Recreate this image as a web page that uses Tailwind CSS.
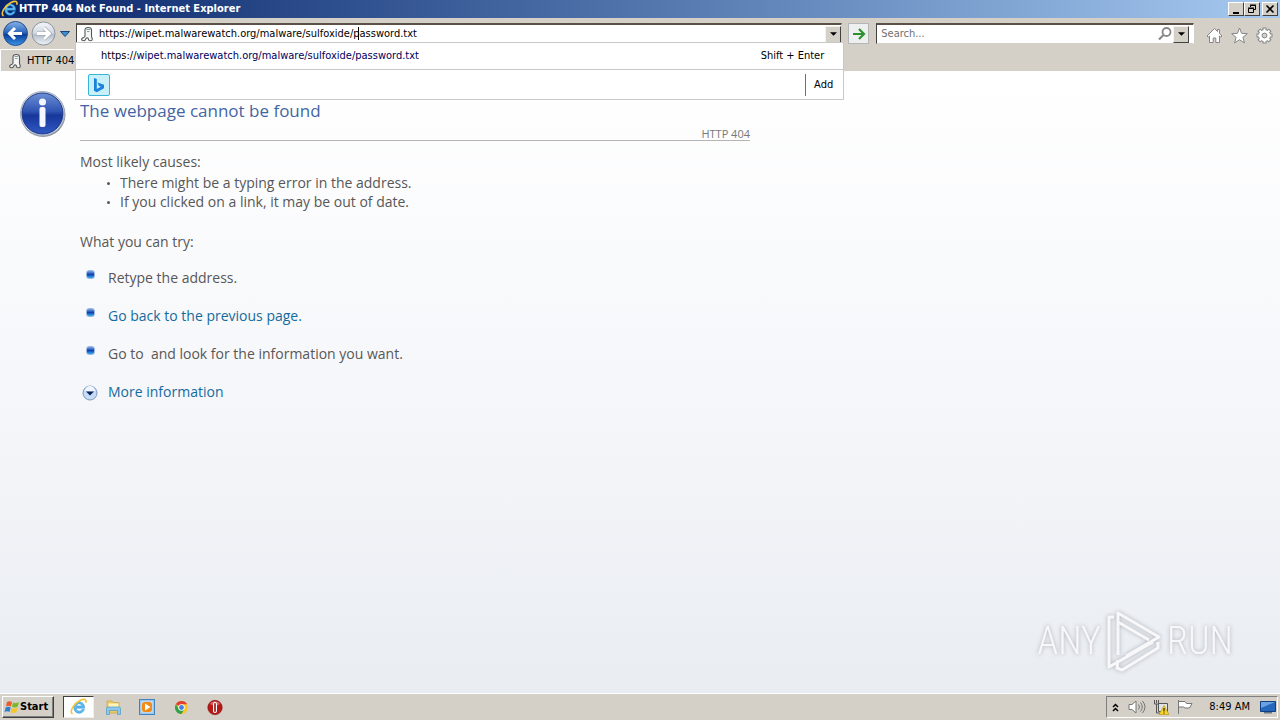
<!DOCTYPE html>
<html lang="en">
<head>
  <meta charset="UTF-8" />
  <title>HTTP 404 Not Found</title>
  <script src="https://cdn.jsdelivr.net/npm/@tailwindcss/browser@4"></script>
</head>
<body class="h-screen flex flex-col overflow-hidden bg-[#d4d0c8] text-black text-[11px] leading-[14px] font-['DejaVu_Sans_Condensed','DejaVu_Sans',sans-serif]">

  <!-- Shared icons -->
  <svg class="hidden">
    <symbol id="ie" viewBox="0 0 18 18">
      <path d="M14.6 10.2H6.2c.1 3.3 4.7 3.9 5.7 1.4h2.5c-2.2 5.600-10.600 4.600-10.600-2.200C3.800 2.200 15 1.700 14.600 10.200zM6.400 8h5.500C11.400 5 6.900 5 6.400 8z" fill="#5cbdf2" stroke="#2a86d0" stroke-width=".5" />
      <path d="M2.500 16C-1 13.500 4 5.500 10 2.500c4.500-2.200 6.800-1 5.700 2.200" fill="none" stroke="#f3c535" stroke-width="1.600" />
    </symbol>
    <symbol id="doc" viewBox="0 0 14 16">
      <path d="M5 10V4C5 .7 11.500.7 11.500 4v6c0 1.500.8 1.800.8 3 0 2.300-3.800 2.300-3.800.2 0-1.400-1.300-1.700-2.300-.9-.9.800-.2 1.900-1.700 2.300-2.200.5-3.700-1.200-2.300-2.300C3.500 11.600 5 11.500 5 10z" fill="#f5f5f5" stroke="#55595c" stroke-width="1.100" />
      <path d="M6.500 3.500H10M7 5.500h2.500" stroke="#83a39c" />
    </symbol>
    <symbol id="down" viewBox="0 0 8 4">
      <path d="M0 0h8L4 4z" />
    </symbol>
  </svg>

  <!-- Title bar -->
  <header class="h-[18px] shrink-0 flex items-center pl-px pr-[2px] bg-linear-to-r from-[#0a246a] to-[#a6caf0]">
    <svg class="size-[18px] shrink-0"><use href="#ie" /></svg>
    <h1 class="flex-1 text-white font-bold">HTTP 404 Not Found - Internet Explorer</h1>
    <div class="flex">
      <button aria-label="Minimize" class="w-4 h-[14px] grid place-items-center bg-[#d4d0c8] border border-t-white border-l-white border-r-[#404040] border-b-[#404040]">
        <svg viewBox="0 0 12 10" class="w-3 h-[10px]"><path d="M3 8h6v2H3z" /></svg>
      </button>
      <button aria-label="Restore" class="w-4 h-[14px] grid place-items-center bg-[#d4d0c8] border border-t-white border-l-white border-r-[#404040] border-b-[#404040]">
        <svg viewBox="0 0 12 10" class="w-3 h-[10px]" fill="none" stroke="#000"><path d="M4.500 3V1.500h5v4H8M4 1h6M2.500 4.500h5v4h-5zM2 4h6" /></svg>
      </button>
      <button aria-label="Close" class="ml-[2px] w-4 h-[14px] grid place-items-center bg-[#d4d0c8] border border-t-white border-l-white border-r-[#404040] border-b-[#404040]">
        <svg viewBox="0 0 12 10" class="w-3 h-[10px]"><path d="M2.500 1.500l7 7M9.500 1.500l-7 7" stroke="#000" stroke-width="1.600" /></svg>
      </button>
    </div>
  </header>

  <!-- Toolbar -->
  <div class="h-[31px] shrink-0 flex items-center pl-[2px] pr-[7px]">
    <button aria-label="Back" class="size-[27px]">
      <svg viewBox="0 0 27 27">
        <defs><linearGradient id="back" x2="0" y2="1"><stop stop-color="#86b3e8" /><stop offset=".45" stop-color="#2c68bd" /><stop offset=".55" stop-color="#0b3d99" /><stop offset="1" stop-color="#3a98ec" /></linearGradient></defs>
        <circle cx="13.500" cy="13.500" r="12" fill="url(#back)" stroke="#2b4f88" />
        <path d="M20 13.500H8M13 8l-5.500 5.500L13 19" fill="none" stroke="#fff" stroke-width="3" />
      </svg>
    </button>
    <button aria-label="Forward" class="ml-px size-[27px]">
      <svg viewBox="0 0 27 27">
        <defs><linearGradient id="fwd" x2="0" y2="1"><stop stop-color="#f4f6f9" /><stop offset=".48" stop-color="#d3d9e1" /><stop offset=".55" stop-color="#b3bcc8" /><stop offset="1" stop-color="#f1f5fa" /></linearGradient></defs>
        <circle cx="13.500" cy="13.500" r="11.500" fill="url(#fwd)" stroke="#8b949f" />
        <path d="M7 13.500h12M14 8l5.500 5.500L14 19" fill="none" stroke="#9aa3ae" stroke-width="4" />
        <path d="M7 13.500h12M14 8l5.500 5.500L14 19" fill="none" stroke="#fff" stroke-width="2.800" />
      </svg>
    </button>
    <button aria-label="Recent pages" class="ml-[3px] w-[10px]">
      <svg viewBox="0 0 10 6" class="w-[10px] h-[6px]"><path d="M.5.500h9L5 5.500z" fill="#3f8fd0" stroke="#16477c" /></svg>
    </button>

    <!-- Address bar with suggestions -->
    <div class="relative ml-[6px] flex-1">
      <div class="h-[21px] flex items-center bg-white border border-t-2 border-t-[#5b5147] border-l-[#404040] border-r-[#d4d0c8] border-b-[#d4d0c8] pl-[3px]">
        <svg class="w-[14px] h-4 shrink-0"><use href="#doc" /></svg>
        <div class="relative flex-1 ml-[5px]">
          <input type="text" aria-label="Address" value="https://wipet.malwarewatch.org/malware/sulfoxide/password.txt" class="block w-full outline-none" />
          <span class="absolute left-[259px] top-0 w-px h-[13px] bg-black"></span>
        </div>
        <button aria-label="Show address list" class="w-4 h-[17px] grid place-items-center bg-[#d4d0c8] border border-t-[#f4f2ee] border-l-[#f4f2ee] border-r-[#404040] border-b-[#404040]">
          <svg class="w-[7px] h-1"><use href="#down" /></svg>
        </button>
      </div>
      <div class="absolute z-10 top-[19px] -left-px -right-[2px] bg-white border border-[#c8c8c8]">
        <a href="#" class="h-[26px] flex items-center pl-[25px] pr-[19px] text-black">
          <span class="flex-1">https://<span class="text-[#00005c]">wipet.malwarewatch.org/malware/sulfoxide/password.txt</span></span>
          <span>Shift + Enter</span>
        </a>
        <div class="h-[30px] flex items-center justify-between pl-3 pr-[10px] border-t border-[#c8c8c8]">
          <button aria-label="Bing" class="size-[22px]">
            <svg viewBox="0 0 22 22">
              <rect x=".5" y=".5" width="21" height="21" rx="1.500" fill="#c8f0fb" stroke="#38b4d6" />
              <path d="M6 4l2.800 1v8.500L8.800 15l4-2.300-2-1-1.300-3.200 6.500 2.300v3.400L8.800 18.300 6 16.700z" fill="#1a83dc" />
            </svg>
          </button>
          <button class="h-[22px] pl-2 border-l border-[#707070]">Add</button>
        </div>
      </div>
    </div>
    <button aria-label="Go" class="ml-[6px] size-[21px] grid place-items-center bg-[#eef0f0] border border-[#b4b6b8]">
      <svg viewBox="0 0 14 12" class="w-[14px] h-3"><path d="M1 6h11M7 1l5 5-5 5" fill="none" stroke="#2d922d" stroke-width="2.200" /></svg>
    </button>
    <div class="ml-[7px] w-[25%] h-[21px] flex items-center bg-white border border-t-2 border-t-[#5b5147] border-l-[#404040] border-r-white border-b-[#d4d0c8] pl-1 pr-1">
      <input type="text" aria-label="Search" placeholder="Search..." class="flex-1 outline-none placeholder:text-[#707070]" />
      <button aria-label="Search" class="w-[14px] h-4">
        <svg viewBox="0 0 14 16" class="w-[14px] h-4" fill="none" stroke="#888" stroke-width="1.800"><circle cx="8.500" cy="6" r="4" /><path d="M5.500 9L1 13.500" stroke-width="2.200" /></svg>
      </button>
      <button aria-label="Search options" class="ml-px w-4 h-[17px] grid place-items-center bg-[#d4d0c8] border border-t-[#f4f2ee] border-l-[#f4f2ee] border-r-[#404040] border-b-[#404040]">
        <svg class="w-[7px] h-1"><use href="#down" /></svg>
      </button>
    </div>
    <div class="ml-3 mt-1 flex gap-2">
      <button aria-label="Home" class="size-[17px]">
        <svg viewBox="0 0 17 17"><path d="M8.500 1.500L1 9l1.200 1.200L3.500 9v6.500h3.700V11h2.600v4.500h3.700V9l1.300 1.200L16 9l-2.500-2.500v-4h-2v2z" fill="#fff" stroke="#858585" /></svg>
      </button>
      <button aria-label="Favorites" class="size-[17px]">
        <svg viewBox="0 0 17 17"><path d="M8.500 1l2.100 5.300 5.700.4-4.400 3.600 1.500 5.600-4.900-3.100-4.900 3.100 1.500-5.600L.7 6.700l5.700-.4z" fill="#fff" stroke="#858585" /></svg>
      </button>
      <button aria-label="Tools" class="size-[17px]">
        <svg viewBox="0 0 17 17" fill="none">
          <path d="M8.500 .5v16M.5 8.500h16M2.800 2.800l11.400 11.400M14.200 2.800L2.800 14.200" stroke="#858585" stroke-width="4" />
          <circle cx="8.500" cy="8.500" r="4.300" stroke="#858585" stroke-width="4.400" />
          <path d="M8.500 1.500v14M1.500 8.500h14M3.500 3.500l10 10M13.500 3.500l-10 10" stroke="#fff" stroke-width="2" />
          <circle cx="8.500" cy="8.500" r="4.200" stroke="#fff" stroke-width="2.800" />
          <circle cx="8.500" cy="8.500" r="2.400" fill="#d4d0c8" stroke="#858585" />
        </svg>
      </button>
    </div>
  </div>

  <!-- Tab row -->
  <div class="h-[22px] shrink-0 flex">
    <button class="flex items-center gap-[5px] pl-[7px] border-l border-t border-white">
      <svg class="w-[14px] h-4"><use href="#doc" /></svg>
      <span>HTTP 404</span>
    </button>
  </div>

  <!-- Error page -->
  <main class="relative flex-1 min-h-0 pt-5 pl-[19px] bg-linear-to-b from-white via-[#f6f7fa] via-50% to-[#e9edf2] text-sm leading-[19px] text-[#575757] font-['Open_Sans','Noto_Sans',sans-serif]">
    <div class="flex">
      <svg viewBox="0 0 48 48" class="size-12 shrink-0">
        <defs><linearGradient id="info" x2="0" y2="1"><stop stop-color="#6e91d5" /><stop offset=".45" stop-color="#2e53b2" /><stop offset=".55" stop-color="#17379a" /><stop offset="1" stop-color="#3159c4" /></linearGradient></defs>
        <circle cx="24" cy="23.500" r="22.500" fill="#8e96a5" />
        <circle cx="23.500" cy="22.500" r="22" fill="#dbe1eb" stroke="#a3acbc" />
        <circle cx="23.500" cy="22.500" r="20.500" fill="url(#info)" stroke="#1c3684" />
        <circle cx="23.500" cy="11" r="3.500" fill="#f4f7ff" />
        <rect x="20.500" y="16" width="6" height="20" rx="2" fill="#f4f7ff" />
      </svg>
      <div class="ml-[13px] w-[670px]">
        <h2 class="pt-2 text-[17px] leading-6 text-[#4465a2]">The webpage cannot be found</h2>
        <p class="mt-1 text-right text-[11px] leading-[13px] text-[#787878] border-b border-[#b5b5b5]">HTTP 404</p>
        <p class="mt-[11px]">Most likely causes:</p>
        <ul class="mt-[2px] pl-10 list-none">
          <li class="relative"><span class="absolute -left-[13px] top-[9px] size-[3px] rounded-full bg-[#575757]"></span>There might be a typing error in the address.</li>
          <li class="relative"><span class="absolute -left-[13px] top-[9px] size-[3px] rounded-full bg-[#575757]"></span>If you clicked on a link, it may be out of date.</li>
        </ul>
        <p class="mt-[21px]">What you can try:</p>
        <ul class="mt-[17px] flex flex-col gap-[19px]">
          <li class="flex">
            <span class="w-[9px] h-[9px] mt-[2px] ml-[6px] mr-[13px] rounded-[3px] border border-[#9bb8e2] bg-linear-to-b from-[#7ba7e6] via-[#123fae] to-[#40b0ee]"></span>
            <span>Retype the address.</span>
          </li>
          <li class="flex">
            <span class="w-[9px] h-[9px] mt-[2px] ml-[6px] mr-[13px] rounded-[3px] border border-[#9bb8e2] bg-linear-to-b from-[#7ba7e6] via-[#123fae] to-[#40b0ee]"></span>
            <a href="#" class="text-[#136b9e]">Go back to the previous page.</a>
          </li>
          <li class="flex">
            <span class="w-[9px] h-[9px] mt-[2px] ml-[6px] mr-[13px] rounded-[3px] border border-[#9bb8e2] bg-linear-to-b from-[#7ba7e6] via-[#123fae] to-[#40b0ee]"></span>
            <span>Go to &nbsp;and look for the information you want.</span>
          </li>
          <li class="flex items-end">
            <svg viewBox="0 0 16 16" class="ml-[2px] mr-[10px] size-4">
              <circle cx="8" cy="8" r="7" fill="#c5dcf6" stroke="#7e99bd" />
              <path d="M3 6a5 5 0 0 1 10 0z" fill="#eff6ff" />
              <path d="M4 6.500h8L8 10.500z" fill="#0c245c" />
            </svg>
            <a href="#" class="text-[#136b9e]">More information</a>
          </li>
        </ul>
      </div>
    </div>

    <!-- Watermark -->
    <div class="absolute right-[47px] bottom-5 flex items-center gap-1 text-[38px] leading-[60px] font-light text-[#f8f8fb] font-['Roboto_Condensed','Open_Sans_Condensed',sans-serif] drop-shadow-[0_0_2px_#aaadb4]">
      <span>ANY</span>
      <svg viewBox="0 0 58 64" class="w-[58px] h-16" fill="none" stroke="#f8f8fb" stroke-width="3" stroke-linejoin="round">
        <path d="M13 46V4L54 28 21 47M13 13l31 18M9 8H4v50l44-25M13 51l-1 8 5 2 36-22v-6" />
      </svg>
      <span>RUN</span>
    </div>
  </main>

  <!-- Taskbar -->
  <footer class="h-[27px] shrink-0 flex items-center pl-[2px] pr-[2px] border-t border-white bg-[#d4d0c8]">
    <button class="h-[22px] w-[52px] flex items-center pl-px font-bold text-[11px] border border-t-white border-l-white border-r-[#404040] border-b-[#404040] shadow-[inset_-1px_-1px_#808080]">
      <svg viewBox="0 0 16 16" class="size-4 shrink-0">
        <path d="M3 3c2-1.300 3.500-1 5 0L7 7.500c-1.600-1-3-1-5 0z" fill="#ed5c24" />
        <path d="M9 3.500c2 1 3.500 1 6-.5l-1.300 4.500c-2 1.500-4 1.300-5.700.3z" fill="#79b82a" />
        <path d="M1.700 8.500c2-1 3.500-1 5 0l-1.200 4.500c-1.600-1-3-1-5 0z" fill="#2b80cf" />
        <path d="M7.700 9c2 1 3.500 1 6-.5l-1.300 4.500c-2 1.500-4 1.300-5.700.3z" fill="#f7c525" />
      </svg>
      <span>Start</span>
    </button>
    <nav class="ml-[9px] flex items-center gap-[17px]">
      <button aria-label="Internet Explorer" class="w-[31px] h-[22px] grid place-items-center bg-white border border-t-[#404040] border-l-[#404040] border-r-[#eee] border-b-[#eee]">
        <svg class="size-[18px]"><use href="#ie" /></svg>
      </button>
      <button aria-label="Windows Explorer" class="-ml-[6px] size-[17px]">
        <svg viewBox="0 0 17 17">
          <path d="M2 2h5l1 1.500h6V14H2z" fill="#eecb62" stroke="#caa246" stroke-width=".7" />
          <path d="M3.500 4.500h10v5h-10z" fill="#fff4bd" />
          <path d="M1.500 15.500V9.500q0-1.500 1.500-1.500h11q1.500 0 1.500 1.500v6h-3v-4h-8v4z" fill="#8dc8ea" stroke="#4f99c4" stroke-width=".7" />
        </svg>
      </button>
      <button aria-label="Media Player" class="size-[17px]">
        <svg viewBox="0 0 17 17">
          <rect x=".5" y=".5" width="15" height="15" fill="#9bc7ec" stroke="#4283be" />
          <rect x="2.500" y="2.500" width="11" height="11" fill="#d8ebfa" />
          <rect x="3" y="3" width="10" height="10" rx="2.500" fill="#f08a19" />
          <path d="M6 4.500v7L11.500 8z" fill="#fff" />
        </svg>
      </button>
      <button aria-label="Chrome" class="size-[17px]">
        <svg viewBox="0 0 17 17">
          <circle cx="8.500" cy="8.500" r="6.500" fill="#f9c62b" />
          <path d="M8.500 8.500L2.870 5.250A6.500 6.500 0 0 1 14.130 5.250H8.500z" fill="#e23d30" />
          <path d="M2.870 5.250A6.500 6.500 0 0 0 8.500 15l2.800-4.900L8.500 8.500 5.700 10z" fill="#2da14c" />
          <circle cx="8.500" cy="8.500" r="3.200" fill="#fff" /><circle cx="8.500" cy="8.500" r="2.400" fill="#3e80e6" />
        </svg>
      </button>
      <button aria-label="Opera" class="size-[17px]">
        <svg viewBox="0 0 17 17">
          <circle cx="8" cy="8.500" r="7.200" fill="#ba1717" stroke="#7d0d0d" stroke-width=".6" />
          <path d="M3 5a6 6 0 0 1 10 0q-5 3-10 0z" fill="#dd6060" />
          <rect x="6" y="3" width="4" height="11" rx="2" fill="#fff" /><rect x="7.200" y="4" width="1.600" height="9" rx=".8" fill="#8f1010" />
        </svg>
      </button>
    </nav>
    <div class="ml-auto h-[22px] flex items-center pl-[5px] border border-t-[#808080] border-l-[#808080] border-r-white border-b-white">
      <button aria-label="Show hidden icons" class="w-[7px]">
        <svg viewBox="0 0 7 9" class="w-[7px] h-[9px]" fill="none" stroke="#000" stroke-width="1.500"><path d="M1 4l2.500-2.500L6 4M1 8l2.500-2.500L6 8" /></svg>
      </button>
      <svg viewBox="0 0 18 16" class="ml-[9px] w-[18px] h-4" fill="none" stroke="#777">
        <path d="M1 5.500h3L8 2v12l-4-3.500H1z" fill="#fff" /><path d="M10.500 5.500q2 2.500 0 5M12.500 3.500q3.500 4.500 0 9M14.500 2q5 6 0 12" />
      </svg>
      <svg viewBox="0 0 16 16" class="ml-[7px] size-4">
        <path d="M5.500 4.500h9v8h-9z" fill="#dfe3e5" stroke="#555" /><path d="M1.500 1v4h4V1M3.500 5v9h4M3.500 1v3" fill="none" stroke="#555" />
        <path d="M11 6.500l5 9H6z" fill="#f8d52c" stroke="#b58d0b" stroke-width=".6" /><path d="M10.500 9h1v3.500h-1zM10.500 13.500h1v1h-1z" />
      </svg>
      <svg viewBox="0 0 16 16" class="ml-2 size-4">
        <path d="M1.500 1v14M2 2.500h6l1.500 2H15L12.500 9H8L6.500 8H2" fill="#fff" stroke="#777" />
      </svg>
      <time class="ml-4">8:49 AM</time>
      <button aria-label="Show desktop" class="ml-[10px] mr-px w-4 h-[14px]">
        <svg viewBox="0 0 16 14"><path d="M.5 1.500h15v10H.5z" fill="#2467bd" stroke="#123f80" /><path d="M1 2h14L1 8z" fill="#69a3e4" /><path d="M4 12h8v1.500H4z" fill="#697683" /></svg>
      </button>
    </div>
  </footer>
</body>
</html>
